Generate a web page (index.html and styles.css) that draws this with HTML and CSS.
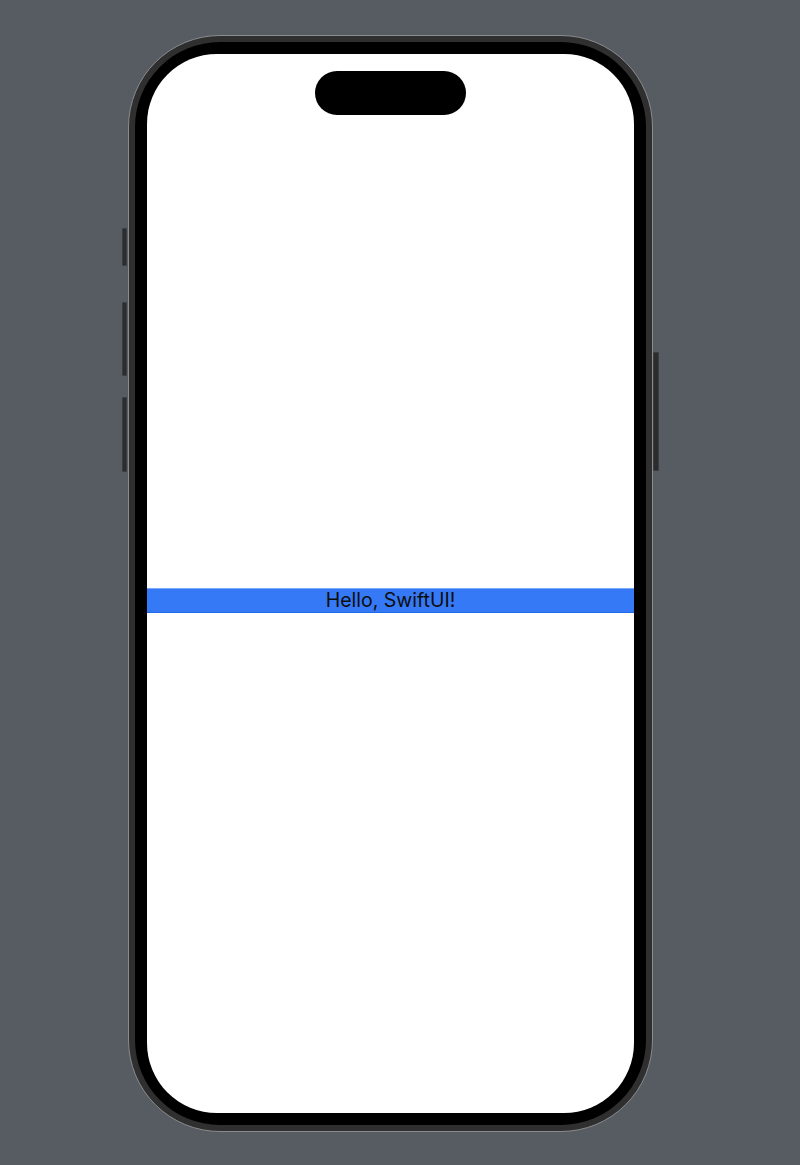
FILE: index.html
```html
<!DOCTYPE html>
<html lang="en">
<head>
    <meta charset="UTF-8">
    <meta name="viewport" content="width=device-width, initial-scale=1.0">
    <title>Preview</title>
    <link rel="stylesheet" href="styles.css">
</head>
<body>
    <div class="phone">
        <span class="botao botao_acao"></span>
        <span class="botao botao_volume_mais"></span>
        <span class="botao botao_volume_menos"></span>
        <span class="botao botao_power"></span>
        <div class="moldura">
            <div class="tela">
                <div class="ilha"></div>
                <p class="texto">Hello, SwiftUI!</p>
            </div>
        </div>
    </div>
</body>
</html>
```

FILE: styles.css
```css
body {
    margin: 0;
    height: 1165px;
    background: #575b62;
    font-family: Inter, "Liberation Sans", sans-serif;
}
.phone {
    position: relative;
    box-sizing: border-box;
    width: 525px;
    height: 1097px;
    margin: 35px 0 0 128px;
    padding: 6px;
    background: #2f2f30;
    border: 1px solid #8a8b8d;
    border-radius: 92px;
}
.moldura {
    height: 100%;
    box-sizing: border-box;
    padding: 12px;
    background: #000;
    border-radius: 85px;
}
.tela {
    position: relative;
    height: 100%;
    background: #fff;
    border-radius: 70px;
    overflow: hidden;
    padding-top: 534px;
    box-sizing: border-box;
}
.ilha {
    position: absolute;
    top: 17px;
    left: 0;
    right: 0;
    margin: 0 auto;
    width: 151px;
    height: 44px;
    background: #000;
    border-radius: 22px;
}
.texto {
    margin: 0;
    height: 23px;
    line-height: 23px;
    text-align: center;
    font-size: 19.5px;
    color: #0d0d0d;
    background: #3579f6;
    border-top: 1px solid #7aa8f8;
    border-bottom: 1px solid #1c6ae8;
}
.botao {
    position: absolute;
    width: 5px;
    background: #2b2c2e;
    border: 1px solid #3c3d40;
    box-sizing: border-box;
    border-radius: 1px;
}
.botao_acao {
    left: -7px;
    top: 192px;
    height: 38px;
}
.botao_volume_mais {
    left: -7px;
    top: 266px;
    height: 74px;
}
.botao_volume_menos {
    left: -7px;
    top: 361px;
    height: 75px;
}
.botao_power {
    right: -7px;
    top: 316px;
    width: 6px;
    height: 119px;
}
```
